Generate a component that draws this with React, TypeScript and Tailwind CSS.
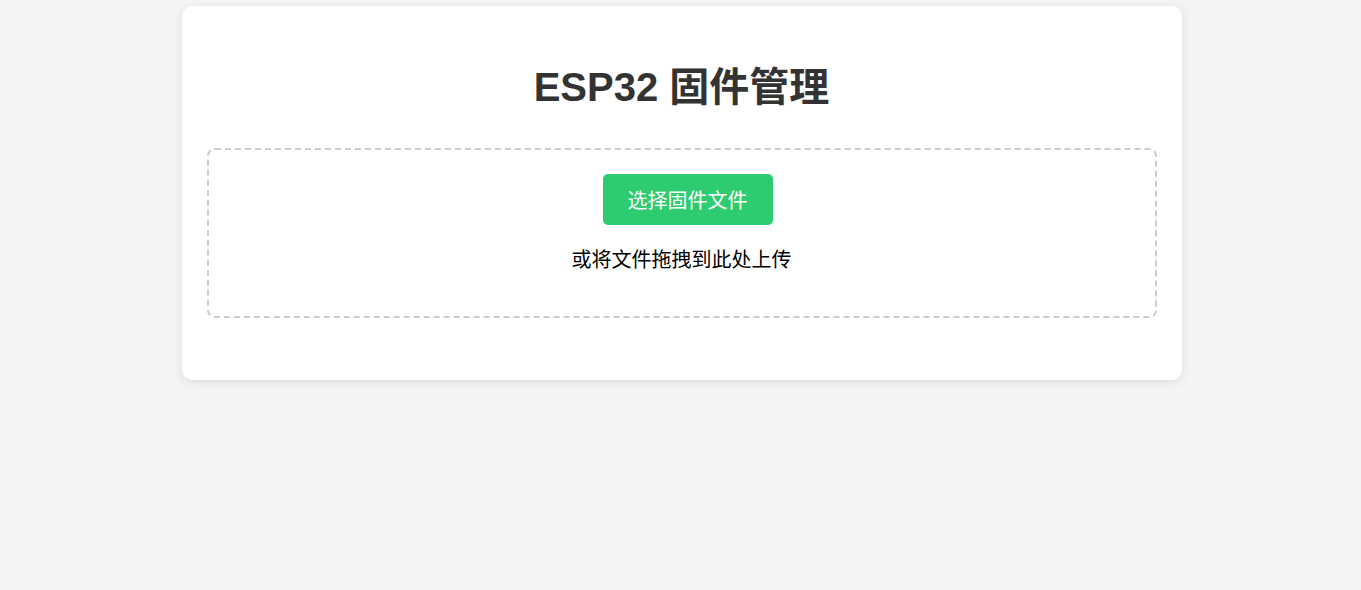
export default function App() {
  return (
    <div
      className="min-h-[590px] w-full bg-[#f4f4f4] pt-[6px] pl-[2px] flex justify-center items-start"
      style={{ fontFamily: '"Liberation Sans", Arial, "Noto Sans CJK SC", sans-serif' }}
    >
      <div className="w-[1000px] h-[374px] bg-white rounded-[10px] shadow-[0_2px_10px_rgba(0,0,0,0.1)] px-[25px] pt-[57px]">
        <h1 className="text-[40px] leading-[48px] font-bold text-[#333333] text-center">
          ESP32 固件管理
        </h1>
        <div className="mt-[37px] h-[170px] border-2 border-dashed border-[#cccccc] rounded-[8px] flex flex-col items-center pt-[24px]">
          <button className="ml-[12px] h-[51px] px-[25px] pt-[4px] bg-[#2ecc71] text-white text-[20px] leading-[47px] rounded-[5px]">
            选择固件文件
          </button>
          <p className="mt-[20px] text-[20px] leading-[30px] text-black">或将文件拖拽到此处上传</p>
        </div>
      </div>
    </div>
  );
}
